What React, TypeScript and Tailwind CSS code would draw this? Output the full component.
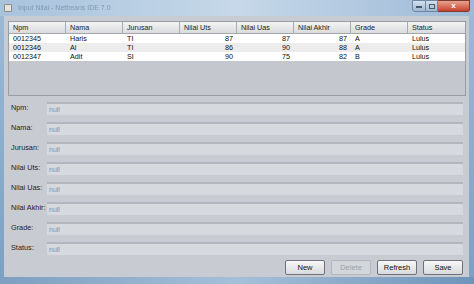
import React from "react";

const cols = ["Npm", "Nama", "Jurusan", "Nilai Uts", "Nilai Uas", "Nilai Akhir", "Grade", "Status"];
const rows = [
  ["0012345", "Haris", "TI", "87", "87", "87", "A", "Lulus"],
  ["0012346", "Al", "TI", "86", "90", "88", "A", "Lulus"],
  ["0012347", "Adit", "SI", "90", "75", "82", "B", "Lulus"],
];
const rightCols = [3, 4, 5];
const labels = ["Npm:", "Nama:", "Jurusan:", "Nilai Uts:", "Nilai Uas:", "Nilai Akhir:", "Grade:", "Status:"];

function Btn({ label, disabled }: { label: string; disabled?: boolean }) {
  return (
    <div
      className={
        "w-[40px] h-[15px] rounded-[2px] border flex items-center justify-center text-[7.5px] " +
        (disabled
          ? "border-[#b4b7bc] bg-[#d3d6da] text-[#9ea1a6]"
          : "border-[#6f7278] bg-gradient-to-b from-[#f7f7f7] to-[#d9dadd] text-[#111]")
      }
    >
      {label}
    </div>
  );
}

export default function App() {
  return (
    <div
      className="w-[474px] h-[284px] flex flex-col overflow-hidden bg-gradient-to-b from-[#9dbbd8] to-[#7aa0c4]"
      style={{ fontFamily: '"Liberation Sans", Arial, sans-serif' }}
    >
      {/* Title bar */}
      <div className="h-[16px] flex items-start bg-gradient-to-r from-[#a8c3dc] via-[#c6d8e9] to-[#9ebad6] relative">
        <div className="ml-[4px] mt-[4px] w-[8px] h-[8px] bg-[#e6e3da] border border-[#8a8a8a] rounded-[1px]" />
        <div className="ml-[6px] mt-[3px] text-[7px] text-[#7e9ab5] blur-[0.6px]">Input Nilai - Netbeans IDE 7.0</div>
        <div className="ml-auto mr-[4px] flex h-[12px]">
          <div className="w-[14px] h-[12px] border border-[#6c86a3] rounded-bl-[3px] bg-gradient-to-b from-[#d3e1ee] to-[#9fb7cf] flex items-end justify-center pb-[3px]">
            <div className="w-[6px] h-[2px] bg-white border border-[#4a5a6b]" />
          </div>
          <div className="w-[12px] h-[12px] border-y border-r border-[#6c86a3] bg-gradient-to-b from-[#d3e1ee] to-[#9fb7cf] flex items-center justify-center">
            <div className="w-[6px] h-[5px] border border-[#4a5a6b] bg-transparent" />
          </div>
          <div className="w-[32px] h-[12px] border-y border-r border-[#7b3a30] rounded-br-[3px] bg-gradient-to-b from-[#e6a090] to-[#c8402c] flex items-center justify-center text-white text-[8px] font-bold leading-none">
            x
          </div>
        </div>
      </div>

      {/* Content */}
      <div className="ml-[4px] mr-[5px] h-[261px] bg-[#c8cbd1] flex flex-col pl-[4px] pr-[3px] pt-[5px]">
        {/* Table */}
        <div className="h-[75px] border border-[#989ca3] bg-[#c4c7cd] flex flex-col">
          <div className="flex h-[12px] bg-gradient-to-b from-[#f4f4f4] to-[#dadbdd] border-b border-[#a3a6ab]">
            {cols.map((c, i) => (
              <div
                key={c}
                className={
                  "w-[57px] shrink-0 pl-[4px] text-[7.2px] text-[#222] leading-[12px] " +
                  (i < cols.length - 1 ? "border-r border-[#a8abb0]" : "")
                }
              >
                {c}
              </div>
            ))}
          </div>
          {rows.map((r, ri) => (
            <div key={ri} className={"flex h-[9px] " + (ri % 2 === 1 ? "bg-[#ececec]" : "bg-white")}>
              {r.map((v, ci) => (
                <div
                  key={ci}
                  className={
                    "w-[57px] shrink-0 text-[7.2px] leading-[9px] text-[#111] " +
                    (rightCols.includes(ci) ? "text-right pr-[4px]" : "pl-[4px]")
                  }
                >
                  {v}
                </div>
              ))}
            </div>
          ))}
        </div>

        {/* Form */}
        <div className="mt-[6px] flex flex-col gap-[7px] pr-[3px]">
          {labels.map((l) => (
            <div key={l} className="flex items-center h-[13px]">
              <div className="w-[39px] shrink-0 pl-[3px] text-[7.3px] text-[#1e1e1e] whitespace-nowrap">{l}</div>
              <div className="flex-1 h-[13px] bg-[#d6d9de] border-t-[2px] border-[#b3b7bd] pl-[2px] text-[7px] leading-[11px] text-[#8e9298]">
                null
              </div>
            </div>
          ))}
        </div>

        {/* Buttons */}
        <div className="mt-[5px] flex justify-end gap-[6px] pr-[3px]">
          <Btn label="New" />
          <Btn label="Delete" disabled />
          <Btn label="Refresh" />
          <Btn label="Save" />
        </div>
      </div>

      {/* Bottom frame */}
      <div className="flex-1 bg-gradient-to-r from-[#7d9fc0] via-[#a5bfd8] to-[#6f94b9]" />
    </div>
  );
}
